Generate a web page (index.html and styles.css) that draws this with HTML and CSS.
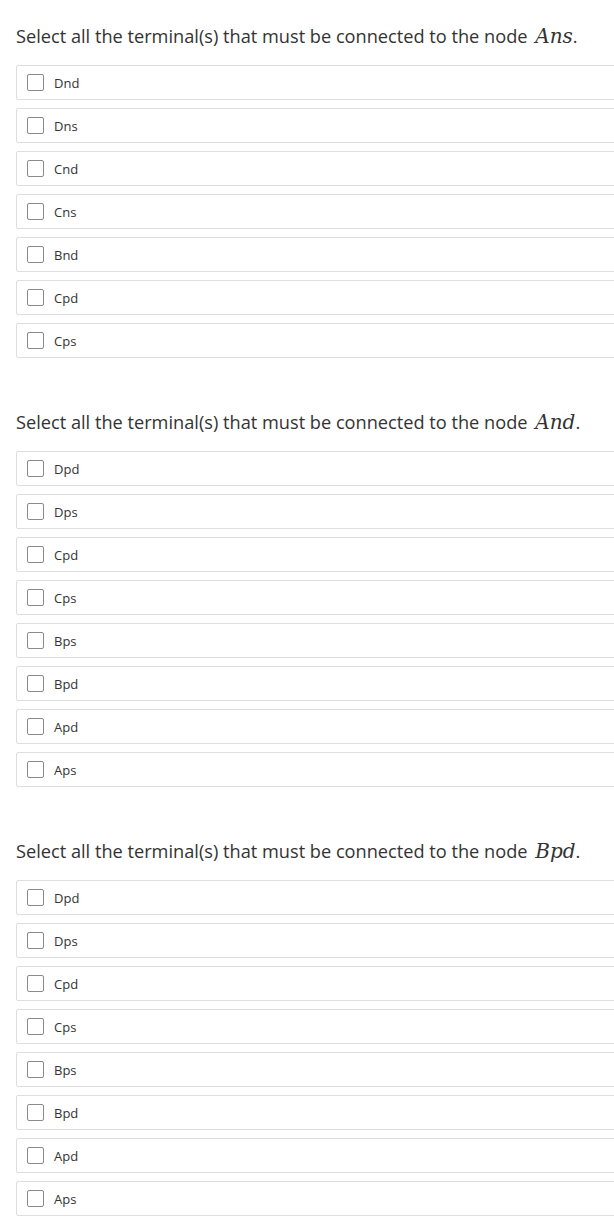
FILE: index.html
```html
<!DOCTYPE html>
<html lang="en">
<head>
<meta charset="utf-8">
<title>Questions</title>
<link rel="stylesheet" href="styles.css">
</head>
<body>
<div class="page">
  <section class="question">
    <h2 class="prompt">Select all the terminal(s) that must be connected to the node <span class="math">Ans</span>.</h2>
    <ul class="options">
      <li class="option"><span class="box"></span><span class="label">Dnd</span></li>
      <li class="option"><span class="box"></span><span class="label">Dns</span></li>
      <li class="option"><span class="box"></span><span class="label">Cnd</span></li>
      <li class="option"><span class="box"></span><span class="label">Cns</span></li>
      <li class="option"><span class="box"></span><span class="label">Bnd</span></li>
      <li class="option"><span class="box"></span><span class="label">Cpd</span></li>
      <li class="option"><span class="box"></span><span class="label">Cps</span></li>
    </ul>
  </section>
  <section class="question">
    <h2 class="prompt">Select all the terminal(s) that must be connected to the node <span class="math">And</span>.</h2>
    <ul class="options">
      <li class="option"><span class="box"></span><span class="label">Dpd</span></li>
      <li class="option"><span class="box"></span><span class="label">Dps</span></li>
      <li class="option"><span class="box"></span><span class="label">Cpd</span></li>
      <li class="option"><span class="box"></span><span class="label">Cps</span></li>
      <li class="option"><span class="box"></span><span class="label">Bps</span></li>
      <li class="option"><span class="box"></span><span class="label">Bpd</span></li>
      <li class="option"><span class="box"></span><span class="label">Apd</span></li>
      <li class="option"><span class="box"></span><span class="label">Aps</span></li>
    </ul>
  </section>
  <section class="question">
    <h2 class="prompt">Select all the terminal(s) that must be connected to the node <span class="math">Bpd</span>.</h2>
    <ul class="options">
      <li class="option"><span class="box"></span><span class="label">Dpd</span></li>
      <li class="option"><span class="box"></span><span class="label">Dps</span></li>
      <li class="option"><span class="box"></span><span class="label">Cpd</span></li>
      <li class="option"><span class="box"></span><span class="label">Cps</span></li>
      <li class="option"><span class="box"></span><span class="label">Bps</span></li>
      <li class="option"><span class="box"></span><span class="label">Bpd</span></li>
      <li class="option"><span class="box"></span><span class="label">Apd</span></li>
      <li class="option"><span class="box"></span><span class="label">Aps</span></li>
    </ul>
  </section>
</div>
</body>
</html>
```
FILE: styles.css
```css
html, body {
  margin: 0;
  padding: 0;
  background: #ffffff;
  overflow: hidden;
}
.page {
  padding: 24px 0 0 16px;
  font-family: "Open Sans", "Noto Sans", sans-serif;
  color: #333333;
  display: flex;
  flex-direction: column;
  gap: 52px;
}
.question {
  display: flex;
  flex-direction: column;
  gap: 17px;
}
.prompt {
  margin: 0;
  font-weight: 400;
  font-size: 18.2px;
  line-height: 24px;
  height: 24px;
  color: #333333;
  white-space: nowrap;
}
.math {
  font-family: "DejaVu Serif", "Liberation Serif", serif;
  font-style: italic;
  font-size: 20px;
  margin-left: 3px;
}
.options {
  list-style: none;
  margin: 0;
  padding: 0;
  display: flex;
  flex-direction: column;
  gap: 8px;
}
.option {
  width: 620px;
  height: 35px;
  box-sizing: border-box;
  border: 1px solid #dedede;
  border-radius: 2px;
  display: flex;
  align-items: center;
  padding-left: 10px;
}
.box {
  width: 17px;
  height: 17px;
  box-sizing: border-box;
  border: 1px solid #8a8a8a;
  border-radius: 2px;
  background: #fff;
  flex: none;
}
.label {
  margin-left: 10px;
  font-size: 13px;
  color: #333333;
}
```
